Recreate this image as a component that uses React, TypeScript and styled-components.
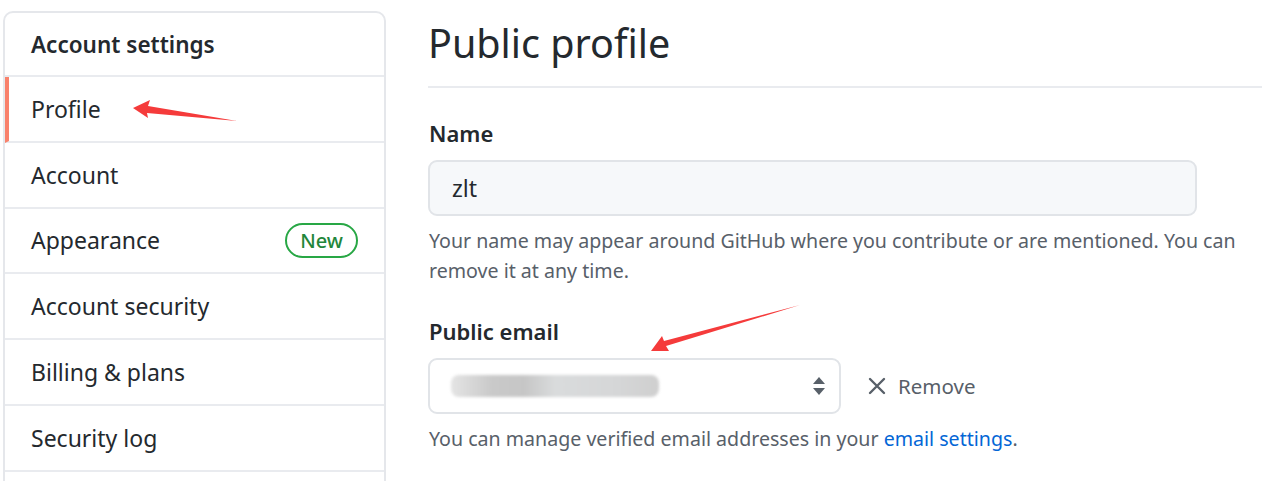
import React from "react";
import styled, { createGlobalStyle } from "styled-components";

const Global = createGlobalStyle`
  html, body { margin: 0; padding: 0; background: #fff; }
  body { font-family: "Noto Sans", "Open Sans", sans-serif; color: #24292e; overflow: hidden; }
`;

const Page = styled.div`
  position: relative;
  display: flex;
  align-items: flex-start;
  gap: 43px;
  padding: 11px 0 0 3px;
  width: 1262px;
  height: 481px;
  box-sizing: border-box;
  overflow: hidden;
`;

const Sidebar = styled.nav`
  flex: 0 0 383px;
  height: 500px;
  border: 2px solid #e5e7eb;
  border-radius: 10px;
  box-sizing: border-box;
  overflow: hidden;
`;

const SideHeader = styled.div`
  height: 62px;
  display: flex;
  align-items: center;
  padding-left: 26px;
  font-size: 22.5px;
  font-weight: 600;
  border-bottom: 2px solid #e9ebef;
`;

const Item = styled.div<{ $active?: boolean }>`
  height: 63.8px;
  display: flex;
  align-items: center;
  justify-content: space-between;
  padding: 0 26px 0 ${(p) => (p.$active ? "22px" : "26px")};
  font-size: 23px;
  border-bottom: 2px solid #e9ebef;
  border-left: ${(p) => (p.$active ? "4px solid #f9826c" : "none")};
`;

const Badge = styled.span`
  font-size: 20px;
  font-weight: 500;
  color: #22863a;
  border: 2px solid #28a745;
  border-radius: 20px;
  padding: 0 13px;
  height: 35px;
  box-sizing: border-box;
  display: inline-flex;
  align-items: center;
  margin-right: 0px;
`;

const Main = styled.main`
  flex: 1;
  display: flex;
  flex-direction: column;
`;

const Heading = styled.h2`
  margin: 0;
  font-size: 39.5px;
  font-weight: 400;
  line-height: 64px;
  padding-bottom: 11px;
  border-bottom: 2px solid #e9ebef;
  margin-left: -1px;
`;

const Label = styled.label<{ $top?: number }>`
  display: block;
  font-size: 22px;
  font-weight: 600;
  margin: ${(p) => p.$top ?? 30}px 0 12px;
`;

const TextInput = styled.div`
  width: 769px;
  height: 56px;
  box-sizing: border-box;
  border: 2px solid #e1e4e8;
  border-radius: 9px;
  background: #f6f8fa;
  margin-left: -1px;
  display: flex;
  align-items: center;
  padding-left: 22px;
  font-size: 23px;
`;

const Note = styled.p`
  margin: 10px 0 0;
  font-size: 19.6px;
  line-height: 30px;
  color: #586069;
  width: 820px;
`;

const Link = styled.a`
  color: #0366d6;
  text-decoration: none;
`;

const SelectRow = styled.div`
  display: flex;
  align-items: center;
  gap: 27px;
`;

const Select = styled.div`
  width: 413px;
  height: 56px;
  box-sizing: border-box;
  border: 2px solid #e1e4e8;
  border-radius: 9px;
  margin-left: -1px;
  display: flex;
  align-items: center;
  justify-content: space-between;
  padding: 0 12px 0 21px;
`;

const Blur = styled.div`
  width: 208px;
  height: 22px;
  border-radius: 8px;
  background: linear-gradient(90deg, #e4e4e4 0%, #c9c9c9 20%, #c6c6c6 35%, #d9dbdc 50%, #d5d6d7 80%, #cfcfcf 100%);
  filter: blur(1.5px);
`;

const RemoveBtn = styled.div`
  display: flex;
  align-items: center;
  gap: 12px;
  font-size: 20.5px;
  color: #586069;
`;

const Overlay = styled.svg`
  position: absolute;
  left: 0;
  top: 0;
  pointer-events: none;
`;

export default function App() {
  return (
    <>
      <Global />
      <Page>
        <Sidebar>
          <SideHeader>Account settings</SideHeader>
          <Item $active>Profile</Item>
          <Item>Account</Item>
          <Item>
            Appearance<Badge>New</Badge>
          </Item>
          <Item>Account security</Item>
          <Item>Billing &amp; plans</Item>
          <Item>Security log</Item>
        </Sidebar>
        <Main>
          <Heading>Public profile</Heading>
          <Label>Name</Label>
          <TextInput>zlt</TextInput>
          <Note>
            Your name may appear around GitHub where you contribute or are mentioned. You can remove it at any time.
          </Note>
          <Label $top={30}>Public email</Label>
          <SelectRow>
            <Select>
              <Blur />
              <svg width="16" height="22" viewBox="0 0 16 22">
                <path d="M8 2 L14 9 H2 Z" fill="#586069" />
                <path d="M8 20 L14 13 H2 Z" fill="#586069" />
              </svg>
            </Select>
            <RemoveBtn>
              <svg width="18" height="18" viewBox="0 0 18 18">
                <path d="M2 2 L16 16 M16 2 L2 16" stroke="#586069" strokeWidth="2.4" strokeLinecap="round" />
              </svg>
              Remove
            </RemoveBtn>
          </SelectRow>
          <Note>
            You can manage verified email addresses in your <Link href="#">email settings</Link>.
          </Note>
        </Main>
        <Overlay width="1262" height="481">
          <path d="M133 108 L150 100 L148 106 L237 121 L147 113 L148 118 Z" fill="#f53b3b" />
          <path d="M651 351 L662 336 L664 341 L800 305 L666 346 L669 351 Z" fill="#f53b3b" />
        </Overlay>
      </Page>
    </>
  );
}
